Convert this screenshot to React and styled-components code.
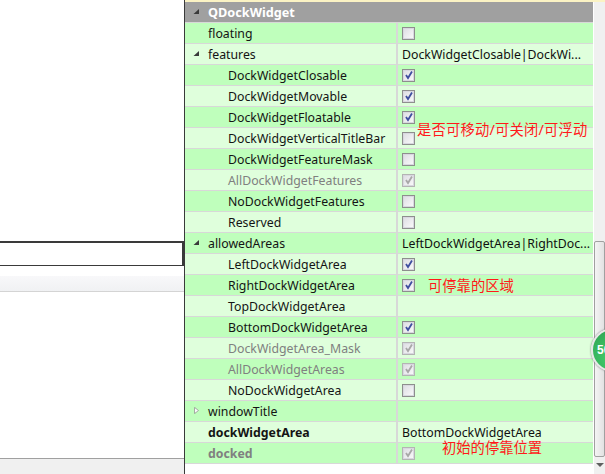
import styled, { createGlobalStyle } from "styled-components";

const GlobalStyle = createGlobalStyle`
    html, body {
        margin: 0;
        padding: 0;
        width: 605px;
        height: 474px;
        overflow: hidden;
        background: #ffffff;
        font-family: "Noto Sans", "Noto Sans CJK SC", sans-serif;
    }
`;

const Page = styled.div`
    width: 605px;
    height: 474px;
    display: flex;
    overflow: hidden;
`;

const LeftPane = styled.div`
    width: 184px;
    height: 474px;
    flex: none;
    display: flex;
    flex-direction: column;
    background: #ffffff;
`;

const TopBlank = styled.div`
    height: 241px;
    flex: none;
    border-bottom: 2px solid #3a3a3a;
`;

const InputBox = styled.div`
    height: 22px;
    flex: none;
    border-right: 2px solid #3a3a3a;
    border-bottom: 1px solid #3a3a3a;
`;

const HeaderGap = styled.div`
    height: 10px;
    flex: none;
`;

const TabStrip = styled.div`
    height: 15px;
    flex: none;
    background: linear-gradient(#f8f8fa, #f0f1f3);
    border-bottom: 1px solid #d4d4d4;
`;

const Blank = styled.div`
    flex: 1;
`;

const StatusBar = styled.div`
    height: 15px;
    flex: none;
    background: #f0f0f0;
    border-top: 1px solid #a0a0a0;
`;

const Divider = styled.div`
    width: 1px;
    flex: none;
    background: #3a3a3a;
`;

const RightPane = styled.div`
    position: relative;
    flex: 1;
    display: flex;
    flex-direction: column;
    min-width: 0;
`;

const TopEdge = styled.div`
    height: 2px;
    flex: none;
    background: #fbf3c4;
`;

const Body = styled.div`
    display: flex;
    flex: 1;
    min-height: 0;
`;

const Table = styled.div`
    width: 408px;
    flex: none;
    display: flex;
    flex-direction: column;
`;

const HeaderRow = styled.div`
    height: 20px;
    flex: none;
    position: relative;
    display: flex;
    align-items: center;
    padding-left: 23px;
    background: #a0a0a0;
    border-bottom: 1px solid #d8d8d8;
    color: #ffffff;
    font-size: 12.7px;
    font-weight: 700;
`;

const Row = styled.div`
    height: 20px;
    flex: none;
    display: flex;
    background: ${(p) => (p.$alt ? "#dfffdc" : "#bfffbc")};
    border-bottom: 1px solid #d8d8d8;
`;

const NameCell = styled.div`
    width: 213px;
    flex: none;
    display: flex;
    align-items: center;
    padding-left: ${(p) => (p.$indent ? 43 : 23)}px;
    box-sizing: border-box;
    position: relative;
    border-right: 2px solid #d8d8d8;
    font-size: 12.3px;
    white-space: nowrap;
    color: ${(p) => (p.$muted ? "#808080" : "#141414")};
    font-weight: ${(p) => (p.$bold ? 700 : 400)};
`;

const ValueCell = styled.div`
    flex: 1;
    display: flex;
    align-items: center;
    padding-left: 4px;
    font-size: 12.3px;
    color: #101010;
    white-space: nowrap;
    overflow: hidden;
`;

const Arrow = styled.svg`
    position: absolute;
    left: 8px;
    top: 6px;
    width: 7px;
    height: 7px;
`;

const HeaderArrow = styled(Arrow)`
    top: 6px;
`;

const Check = styled.span`
    width: 11px;
    height: 11px;
    display: block;
    position: relative;
    border: 1px solid ${(p) => (p.$disabled ? "#b4b4b4" : "#8e8e8e")};
    box-shadow: inset 0 0 0 1px #d8d8e0;
    background: linear-gradient(135deg, #dcdce2, #fbfbfb);
`;

const Tick = styled.svg`
    position: absolute;
    left: 1px;
    top: 0;
    width: 10px;
    height: 10px;
`;

const Note = styled.span`
    position: absolute;
    color: #ff1a1a;
    font-size: 14.3px;
    letter-spacing: ${(p) => p.$spacing || 0}px;
    white-space: nowrap;
    left: ${(p) => p.$x}px;
    top: ${(p) => p.$y}px;
`;

const ScrollBar = styled.div`
    flex: 1;
    display: flex;
    flex-direction: column;
    background: #f0f0f0;
    border-left: 1px solid #ffffff;
`;

const ScrollThumb = styled.div`
    margin-top: 239px;
    flex: 1;
    background: linear-gradient(90deg, #f4f4f4, #e2e2e2);
    border: 1px solid #a0a0a0;
    border-radius: 2px;
`;

const ScrollButton = styled.div`
    height: 17px;
    flex: none;
    display: flex;
    align-items: center;
    justify-content: center;
`;

const Badge = styled.div`
    position: absolute;
    left: 406px;
    top: 328px;
    width: 44px;
    height: 44px;
    border-radius: 50%;
    background: radial-gradient(circle at 50% 70%, #45d070, #2da04e);
    border: 2px solid #e8e8e8;
    box-shadow: 0 0 2px #666666;
    box-sizing: border-box;
    color: #ffffff;
    font: 700 12px "Liberation Sans", sans-serif;
    display: flex;
    align-items: center;
    padding-left: 4px;
`;

const rows = [
    { name: "floating", check: "off" },
    { name: "features", open: true, value: "DockWidgetClosable|DockWi..." },
    { name: "DockWidgetClosable", indent: true, check: "on" },
    { name: "DockWidgetMovable", indent: true, check: "on" },
    { name: "DockWidgetFloatable", indent: true, check: "on" },
    { name: "DockWidgetVerticalTitleBar", indent: true, check: "off" },
    { name: "DockWidgetFeatureMask", indent: true, check: "off" },
    { name: "AllDockWidgetFeatures", indent: true, check: "dis", muted: true },
    { name: "NoDockWidgetFeatures", indent: true, check: "off" },
    { name: "Reserved", indent: true, check: "off" },
    { name: "allowedAreas", open: true, value: "LeftDockWidgetArea|RightDoc..." },
    { name: "LeftDockWidgetArea", indent: true, check: "on" },
    { name: "RightDockWidgetArea", indent: true, check: "on" },
    { name: "TopDockWidgetArea", indent: true },
    { name: "BottomDockWidgetArea", indent: true, check: "on" },
    { name: "DockWidgetArea_Mask", indent: true, check: "dis", muted: true },
    { name: "AllDockWidgetAreas", indent: true, check: "dis", muted: true },
    { name: "NoDockWidgetArea", indent: true, check: "off" },
    { name: "windowTitle", closed: true },
    { name: "dockWidgetArea", bold: true, value: "BottomDockWidgetArea" },
    { name: "docked", bold: true, muted: true, check: "dis" },
];

function OpenArrow({ as: Comp = Arrow }) {
    return (
        <Comp viewBox="0 0 7 7">
            <path d="M6 1 L6 6 L0.5 6 Z" fill="#3a3a3a" />
        </Comp>
    );
}

function ClosedArrow() {
    return (
        <Arrow viewBox="0 0 7 9">
            <path d="M1 0.5 L6 4.5 L1 8.5 Z" fill="#ffffff" stroke="#909090" />
        </Arrow>
    );
}

function CheckBox({ state }) {
    const color = state === "dis" ? "#a8a8a8" : "#3f4f9f";
    return (
        <Check $disabled={state === "dis"}>
            {state !== "off" && (
                <Tick viewBox="0 0 10 10">
                    <path d="M2 5 L4 8 L8 1.5" fill="none" stroke={color} strokeWidth="1.8" />
                </Tick>
            )}
        </Check>
    );
}

export default function App() {
    return (
        <Page>
            <GlobalStyle />
            <LeftPane>
                <TopBlank />
                <InputBox />
                <HeaderGap />
                <TabStrip />
                <Blank />
                <StatusBar />
            </LeftPane>
            <Divider />
            <RightPane>
                <TopEdge />
                <Body>
                    <Table>
                        <HeaderRow>
                            <OpenArrow as={HeaderArrow} />
                            QDockWidget
                        </HeaderRow>
                        {rows.map((row, index) => (
                            <Row key={row.name} $alt={index % 2 === 1}>
                                <NameCell $indent={row.indent} $muted={row.muted} $bold={row.bold}>
                                    {row.open && <OpenArrow />}
                                    {row.closed && <ClosedArrow />}
                                    {row.name}
                                </NameCell>
                                <ValueCell>
                                    {row.value}
                                    {row.check && <CheckBox state={row.check} />}
                                </ValueCell>
                            </Row>
                        ))}
                    </Table>
                    <ScrollBar>
                        <ScrollThumb />
                        <ScrollButton>
                            <svg width="8" height="5" viewBox="0 0 8 5">
                                <path d="M0 0 L8 0 L4 4 Z" fill="#606060" />
                            </svg>
                        </ScrollButton>
                    </ScrollBar>
                </Body>
                <Note $x={232} $y={118} $spacing={0.2}>是否可移动/可关闭/可浮动</Note>
                <Note $x={243} $y={274}>可停靠的区域</Note>
                <Note $x={257} $y={436}>初始的停靠位置</Note>
                <Badge>50</Badge>
            </RightPane>
        </Page>
    );
}
